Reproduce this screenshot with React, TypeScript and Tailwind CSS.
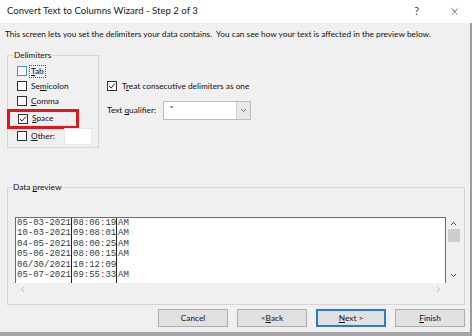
import React from 'react'

const rows = [
  ['05-03-2021', '08:06:19', 'AM'],
  ['10-03-2021', '09:08:01', 'AM'],
  ['04-05-2021', '08:00:25', 'AM'],
  ['05-06-2021', '08:00:15', 'AM'],
  ['06/30/2021', '10:12:09', ''],
  ['05-07-2021', '09:55:33', 'AM'],
]

function Box({ checked = false, focus = false }: { checked?: boolean; focus?: boolean }) {
  return (
    <span
      className={`w-[10px] h-[10px] shrink-0 bg-white border flex items-center justify-center ${
        focus ? 'border-[#4a90d9]' : 'border-[#333]'
      }`}
    >
      {checked && (
        <svg width="8" height="8" viewBox="0 0 8 8">
          <polyline points="1,4 3,6 7,1.5" fill="none" stroke="#222" strokeWidth="1" />
        </svg>
      )}
    </span>
  )
}

function Btn({ children, primary = false }: { children: React.ReactNode; primary?: boolean }) {
  return (
    <div
      className={`w-[70px] h-[18px] flex items-center justify-center bg-[#e1e1e1] ${
        primary ? 'border-2 border-[#2a7ad2]' : 'border border-[#adadad]'
      }`}
    >
      {children}
    </div>
  )
}

export default function App() {
  return (
    <div className="w-[474px] h-[336px] flex flex-col text-[8.3px] text-[#111] font-['Lato',sans-serif] overflow-hidden">
      {/* title bar */}
      <div className="h-[23px] shrink-0 bg-white flex items-center justify-between pl-[7px] pr-[15px] text-[9.6px] text-[#222]">
        <span>Convert Text to Columns Wizard - Step 2 of 3</span>
        <div className="flex items-center gap-[31px] text-[11px] text-[#444]">
          <span>?</span>
          <span className="text-[15px] font-light leading-none">×</span>
        </div>
      </div>

      <div className="flex-1 flex flex-col bg-[#f0f0f0] border-r-2 border-r-[#9c9c9c] border-b-[4px] border-b-[#a6a6a6] mr-[2px]">
        <p className="pl-[5px] pt-[5px] leading-[12px] whitespace-nowrap">
          This screen lets you set the delimiters your data contains.&nbsp; You can see how your text is affected in the preview below.
        </p>

        <div className="flex mt-[10px] pl-[7px]">
          <fieldset className="w-[92px] h-[98px] border border-[#d5d5d5] pl-[1px]">
            <legend className="ml-[4px] px-[1px] leading-[11px]">Delimiters</legend>
            <div className="flex flex-col mt-[2.5px]">
              <div className="h-[15px] flex items-center gap-[3px] pl-[8px]">
                <Box focus />
                <span className="outline outline-1 outline-dotted outline-[#555] px-[1px] leading-[11px]">
                  <u>T</u>ab
                </span>
              </div>
              <div className="h-[15px] flex items-center gap-[4px] pl-[8px]">
                <Box />
                <span>
                  Se<u>m</u>icolon
                </span>
              </div>
              <div className="h-[15px] flex items-center gap-[4px] pl-[8px]">
                <Box />
                <span>
                  <u>C</u>omma
                </span>
              </div>
              <div className="h-[20px] -ml-[2px] mr-[19px] flex items-center gap-[4px] pl-[8px] border-[3px] border-[#e3161b]">
                <Box checked />
                <span>
                  <u>S</u>pace
                </span>
              </div>
              <div className="h-[15px] flex items-center gap-[4px] pl-[8px]">
                <Box />
                <span>
                  <u>O</u>ther:
                </span>
                <span className="ml-[5px] w-[28px] h-[17px] bg-white border border-[#e6e6e6]" />
              </div>
            </div>
          </fieldset>

          <div className="flex flex-col pl-[8px] pt-[30px]">
            <div className="flex items-center gap-[5px] h-[12px]">
              <Box checked />
              <span>
                T<u>r</u>eat consecutive delimiters as one
              </span>
            </div>
            <div className="flex items-center mt-[9px]">
              <span className="w-[56px]">
                Text <u>q</u>ualifier:
              </span>
              <div className="w-[88px] h-[19px] bg-white border border-[#bcbcbc] flex">
                <span className="flex-1 pl-[6px] leading-[15px]">"</span>
                <span className="w-[14px] border-l border-[#cfcfcf] bg-[#e8e8e8] flex items-center justify-center">
                  <svg width="7" height="5" viewBox="0 0 7 5">
                    <polyline points="1,1 3.5,3.5 6,1" fill="none" stroke="#777" strokeWidth="1" />
                  </svg>
                </span>
              </div>
            </div>
          </div>
        </div>

        <fieldset className="mt-[34px] ml-[7px] w-[458px] h-[123px] border border-[#d5d5d5] flex flex-col">
          <legend className="ml-[4px] px-[1px] leading-[11px]">
            Data <u>p</u>review
          </legend>
          <div className="mt-[24px] ml-[7px] flex">
            <div className="w-[431px] flex flex-col">
              <div className="h-[66px] bg-white border-t border-l border-r border-[#6b6b6b] flex font-['Liberation_Mono',monospace] text-[9px] text-[#3a3a3a] leading-[10.4px] whitespace-pre overflow-hidden">
                <div className="w-[56px] border-r border-[#222] pl-[1px]">
                  {rows.map((r, i) => (
                    <div key={i}>{r[0]}</div>
                  ))}
                </div>
                <div className="w-[45px] border-r border-[#222] pl-[1px]">
                  {rows.map((r, i) => (
                    <div key={i}>{r[1]}</div>
                  ))}
                </div>
                <div className="pl-[1px]">
                  {rows.map((r, i) => (
                    <div key={i} className="h-[10.4px]">
                      {r[2]}
                    </div>
                  ))}
                </div>
              </div>
              <div className="h-[13px] flex items-center justify-between px-[5px]">
                <svg width="5" height="7" viewBox="0 0 5 7">
                  <polyline points="4,1 1.5,3.5 4,6" fill="none" stroke="#bbb" strokeWidth="1" />
                </svg>
                <svg width="5" height="7" viewBox="0 0 5 7">
                  <polyline points="1,1 3.5,3.5 1,6" fill="none" stroke="#bbb" strokeWidth="1" />
                </svg>
              </div>
            </div>
            <div className="w-[13px] h-[66px] flex flex-col items-center pt-[4px] ml-[1px]">
              <svg width="7" height="5" viewBox="0 0 7 5">
                <polyline points="1,4 3.5,1.5 6,4" fill="none" stroke="#444" strokeWidth="1" />
              </svg>
              <div className="mt-[3px] w-[12px] h-[13px] bg-[#cdcdcd]" />
              <div className="flex-1" />
              <svg width="7" height="5" viewBox="0 0 7 5" className="mb-[5px]">
                <polyline points="1,1 3.5,3.5 6,1" fill="none" stroke="#444" strokeWidth="1" />
              </svg>
            </div>
          </div>
        </fieldset>

        <div className="flex justify-end gap-[9px] pr-[5px] mt-[4px]">
          <Btn>Cancel</Btn>
          <Btn>
            &lt; <u>B</u>ack
          </Btn>
          <Btn primary>
            <u>N</u>ext &gt;
          </Btn>
          <Btn>
            <u>F</u>inish
          </Btn>
        </div>
      </div>
    </div>
  )
}
